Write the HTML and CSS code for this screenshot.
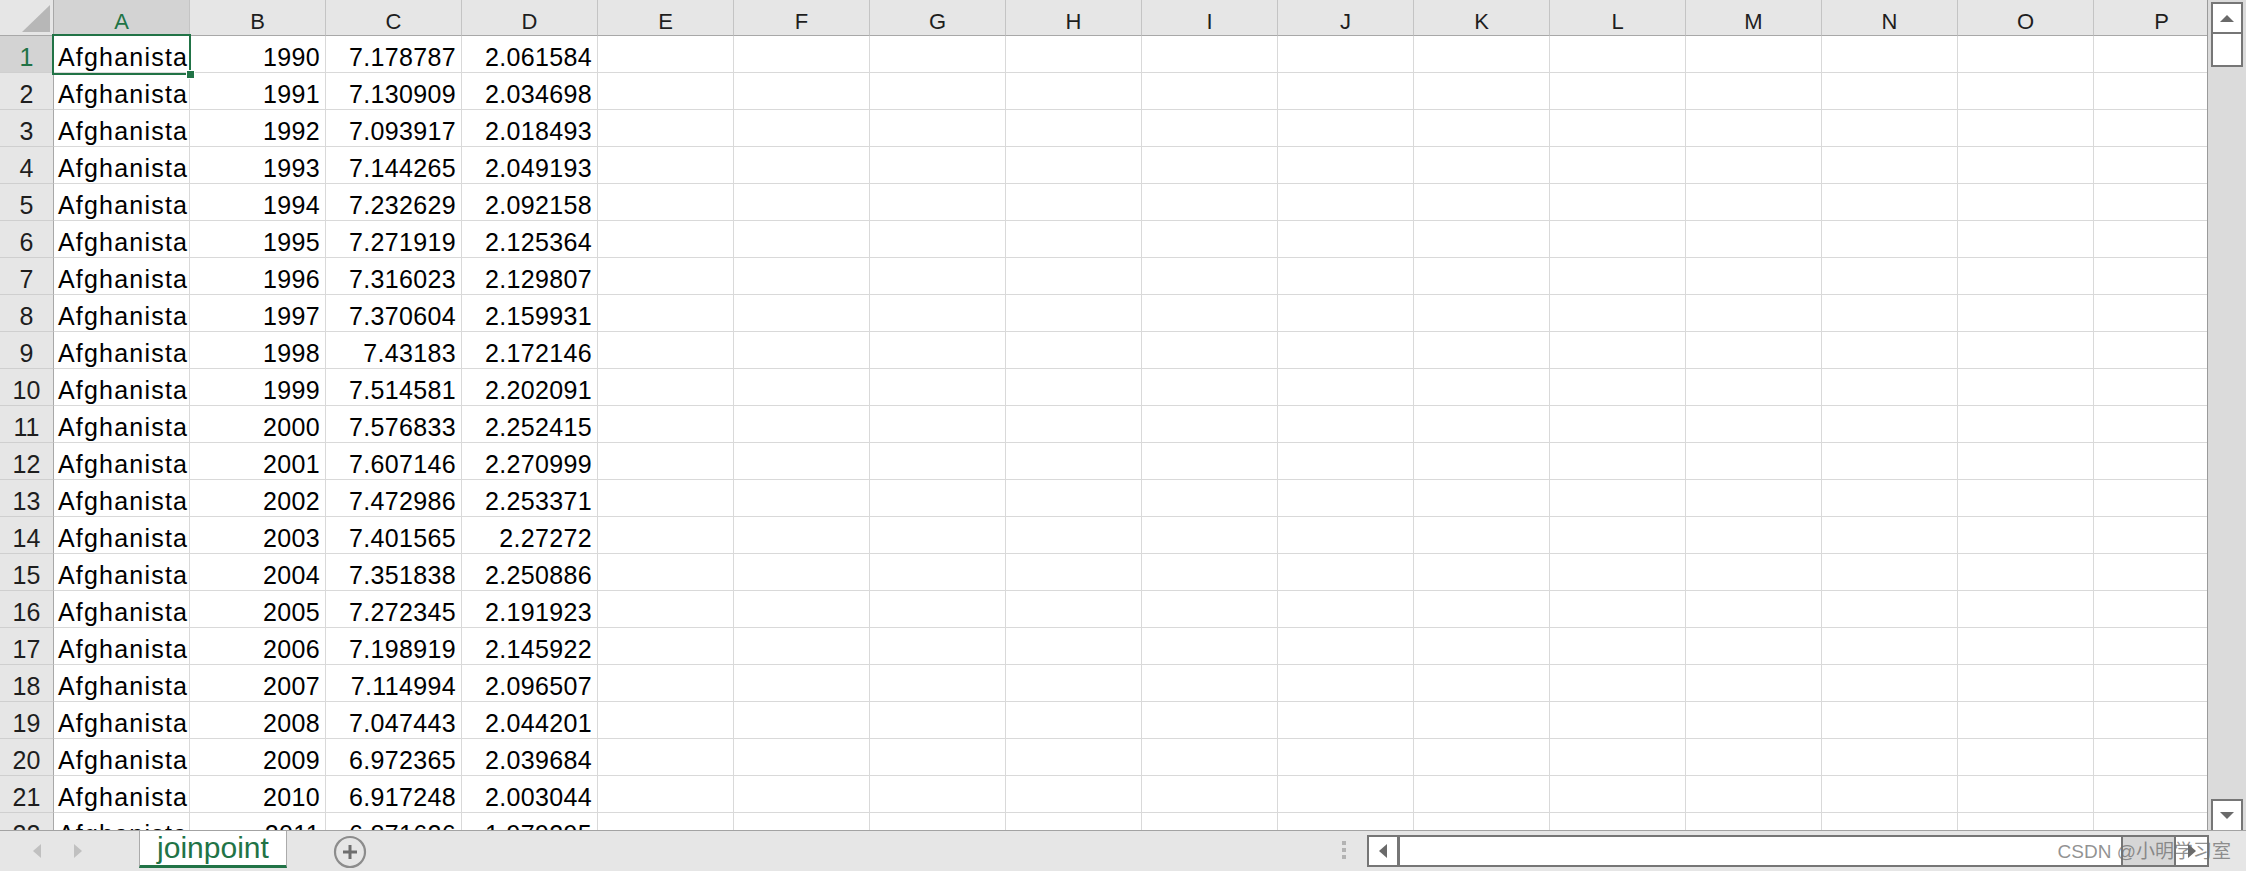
FILE: index.html
```html
<!DOCTYPE html>
<html lang="en">
<head>
<meta charset="utf-8">
<title>joinpoint</title>
<link rel="stylesheet" href="styles.css">
</head>
<body>
<div class="app">
  <div class="main">
    <div class="sheet">
      <div class="grid">
        <div class="corner"><span class="tri"></span></div>
        <div class="ch sel">A</div><div class="ch">B</div><div class="ch">C</div><div class="ch">D</div><div class="ch">E</div><div class="ch">F</div><div class="ch">G</div><div class="ch">H</div><div class="ch">I</div><div class="ch">J</div><div class="ch">K</div><div class="ch">L</div><div class="ch">M</div><div class="ch">N</div><div class="ch">O</div><div class="ch">P</div>

        <div class="rh sel">1</div><div class="c t">Afghanistan</div><div class="c n">1990</div><div class="c n">7.178787</div><div class="c n">2.061584</div>
        <div class="c"></div><div class="c"></div><div class="c"></div><div class="c"></div><div class="c"></div><div class="c"></div><div class="c"></div><div class="c"></div><div class="c"></div><div class="c"></div><div class="c"></div><div class="c"></div>
        <div class="rh">2</div><div class="c t">Afghanistan</div><div class="c n">1991</div><div class="c n">7.130909</div><div class="c n">2.034698</div>
        <div class="c"></div><div class="c"></div><div class="c"></div><div class="c"></div><div class="c"></div><div class="c"></div><div class="c"></div><div class="c"></div><div class="c"></div><div class="c"></div><div class="c"></div><div class="c"></div>
        <div class="rh">3</div><div class="c t">Afghanistan</div><div class="c n">1992</div><div class="c n">7.093917</div><div class="c n">2.018493</div>
        <div class="c"></div><div class="c"></div><div class="c"></div><div class="c"></div><div class="c"></div><div class="c"></div><div class="c"></div><div class="c"></div><div class="c"></div><div class="c"></div><div class="c"></div><div class="c"></div>
        <div class="rh">4</div><div class="c t">Afghanistan</div><div class="c n">1993</div><div class="c n">7.144265</div><div class="c n">2.049193</div>
        <div class="c"></div><div class="c"></div><div class="c"></div><div class="c"></div><div class="c"></div><div class="c"></div><div class="c"></div><div class="c"></div><div class="c"></div><div class="c"></div><div class="c"></div><div class="c"></div>
        <div class="rh">5</div><div class="c t">Afghanistan</div><div class="c n">1994</div><div class="c n">7.232629</div><div class="c n">2.092158</div>
        <div class="c"></div><div class="c"></div><div class="c"></div><div class="c"></div><div class="c"></div><div class="c"></div><div class="c"></div><div class="c"></div><div class="c"></div><div class="c"></div><div class="c"></div><div class="c"></div>
        <div class="rh">6</div><div class="c t">Afghanistan</div><div class="c n">1995</div><div class="c n">7.271919</div><div class="c n">2.125364</div>
        <div class="c"></div><div class="c"></div><div class="c"></div><div class="c"></div><div class="c"></div><div class="c"></div><div class="c"></div><div class="c"></div><div class="c"></div><div class="c"></div><div class="c"></div><div class="c"></div>
        <div class="rh">7</div><div class="c t">Afghanistan</div><div class="c n">1996</div><div class="c n">7.316023</div><div class="c n">2.129807</div>
        <div class="c"></div><div class="c"></div><div class="c"></div><div class="c"></div><div class="c"></div><div class="c"></div><div class="c"></div><div class="c"></div><div class="c"></div><div class="c"></div><div class="c"></div><div class="c"></div>
        <div class="rh">8</div><div class="c t">Afghanistan</div><div class="c n">1997</div><div class="c n">7.370604</div><div class="c n">2.159931</div>
        <div class="c"></div><div class="c"></div><div class="c"></div><div class="c"></div><div class="c"></div><div class="c"></div><div class="c"></div><div class="c"></div><div class="c"></div><div class="c"></div><div class="c"></div><div class="c"></div>
        <div class="rh">9</div><div class="c t">Afghanistan</div><div class="c n">1998</div><div class="c n">7.43183</div><div class="c n">2.172146</div>
        <div class="c"></div><div class="c"></div><div class="c"></div><div class="c"></div><div class="c"></div><div class="c"></div><div class="c"></div><div class="c"></div><div class="c"></div><div class="c"></div><div class="c"></div><div class="c"></div>
        <div class="rh">10</div><div class="c t">Afghanistan</div><div class="c n">1999</div><div class="c n">7.514581</div><div class="c n">2.202091</div>
        <div class="c"></div><div class="c"></div><div class="c"></div><div class="c"></div><div class="c"></div><div class="c"></div><div class="c"></div><div class="c"></div><div class="c"></div><div class="c"></div><div class="c"></div><div class="c"></div>
        <div class="rh">11</div><div class="c t">Afghanistan</div><div class="c n">2000</div><div class="c n">7.576833</div><div class="c n">2.252415</div>
        <div class="c"></div><div class="c"></div><div class="c"></div><div class="c"></div><div class="c"></div><div class="c"></div><div class="c"></div><div class="c"></div><div class="c"></div><div class="c"></div><div class="c"></div><div class="c"></div>
        <div class="rh">12</div><div class="c t">Afghanistan</div><div class="c n">2001</div><div class="c n">7.607146</div><div class="c n">2.270999</div>
        <div class="c"></div><div class="c"></div><div class="c"></div><div class="c"></div><div class="c"></div><div class="c"></div><div class="c"></div><div class="c"></div><div class="c"></div><div class="c"></div><div class="c"></div><div class="c"></div>
        <div class="rh">13</div><div class="c t">Afghanistan</div><div class="c n">2002</div><div class="c n">7.472986</div><div class="c n">2.253371</div>
        <div class="c"></div><div class="c"></div><div class="c"></div><div class="c"></div><div class="c"></div><div class="c"></div><div class="c"></div><div class="c"></div><div class="c"></div><div class="c"></div><div class="c"></div><div class="c"></div>
        <div class="rh">14</div><div class="c t">Afghanistan</div><div class="c n">2003</div><div class="c n">7.401565</div><div class="c n">2.27272</div>
        <div class="c"></div><div class="c"></div><div class="c"></div><div class="c"></div><div class="c"></div><div class="c"></div><div class="c"></div><div class="c"></div><div class="c"></div><div class="c"></div><div class="c"></div><div class="c"></div>
        <div class="rh">15</div><div class="c t">Afghanistan</div><div class="c n">2004</div><div class="c n">7.351838</div><div class="c n">2.250886</div>
        <div class="c"></div><div class="c"></div><div class="c"></div><div class="c"></div><div class="c"></div><div class="c"></div><div class="c"></div><div class="c"></div><div class="c"></div><div class="c"></div><div class="c"></div><div class="c"></div>
        <div class="rh">16</div><div class="c t">Afghanistan</div><div class="c n">2005</div><div class="c n">7.272345</div><div class="c n">2.191923</div>
        <div class="c"></div><div class="c"></div><div class="c"></div><div class="c"></div><div class="c"></div><div class="c"></div><div class="c"></div><div class="c"></div><div class="c"></div><div class="c"></div><div class="c"></div><div class="c"></div>
        <div class="rh">17</div><div class="c t">Afghanistan</div><div class="c n">2006</div><div class="c n">7.198919</div><div class="c n">2.145922</div>
        <div class="c"></div><div class="c"></div><div class="c"></div><div class="c"></div><div class="c"></div><div class="c"></div><div class="c"></div><div class="c"></div><div class="c"></div><div class="c"></div><div class="c"></div><div class="c"></div>
        <div class="rh">18</div><div class="c t">Afghanistan</div><div class="c n">2007</div><div class="c n">7.114994</div><div class="c n">2.096507</div>
        <div class="c"></div><div class="c"></div><div class="c"></div><div class="c"></div><div class="c"></div><div class="c"></div><div class="c"></div><div class="c"></div><div class="c"></div><div class="c"></div><div class="c"></div><div class="c"></div>
        <div class="rh">19</div><div class="c t">Afghanistan</div><div class="c n">2008</div><div class="c n">7.047443</div><div class="c n">2.044201</div>
        <div class="c"></div><div class="c"></div><div class="c"></div><div class="c"></div><div class="c"></div><div class="c"></div><div class="c"></div><div class="c"></div><div class="c"></div><div class="c"></div><div class="c"></div><div class="c"></div>
        <div class="rh">20</div><div class="c t">Afghanistan</div><div class="c n">2009</div><div class="c n">6.972365</div><div class="c n">2.039684</div>
        <div class="c"></div><div class="c"></div><div class="c"></div><div class="c"></div><div class="c"></div><div class="c"></div><div class="c"></div><div class="c"></div><div class="c"></div><div class="c"></div><div class="c"></div><div class="c"></div>
        <div class="rh">21</div><div class="c t">Afghanistan</div><div class="c n">2010</div><div class="c n">6.917248</div><div class="c n">2.003044</div>
        <div class="c"></div><div class="c"></div><div class="c"></div><div class="c"></div><div class="c"></div><div class="c"></div><div class="c"></div><div class="c"></div><div class="c"></div><div class="c"></div><div class="c"></div><div class="c"></div>
        <div class="rh">22</div><div class="c t">Afghanistan</div><div class="c n">2011</div><div class="c n">6.871626</div><div class="c n">1.979295</div>
        <div class="c"></div><div class="c"></div><div class="c"></div><div class="c"></div><div class="c"></div><div class="c"></div><div class="c"></div><div class="c"></div><div class="c"></div><div class="c"></div><div class="c"></div><div class="c"></div>
      </div>
      <div class="selection"><span class="handle"></span></div>
    </div>
    <div class="vscroll">
      <div class="sbtn up"><span class="tri-up"></span></div>
      <div class="vthumb"></div>
      <div class="vtrack"></div>
      <div class="sbtn down"><span class="tri-down"></span></div>
    </div>
  </div>
  <div class="bottombar">
    <div class="nav">
      <span class="tri-left light"></span>
      <span class="tri-right light"></span>
    </div>
    <div class="tab">joinpoint</div>
    <div class="add">
      <svg width="34" height="34" viewBox="0 0 34 34"><circle cx="17" cy="17" r="15" fill="none" stroke="#8c8c8c" stroke-width="2.2"/><path d="M17 10v14M10 17h14" stroke="#6e6e6e" stroke-width="3"/></svg>
    </div>
    <div class="spacer"></div>
    <div class="dots"><i></i><i></i><i></i></div>
    <div class="hscroll">
      <div class="hbtn left"><span class="tri-left"></span></div>
      <div class="hthumb"></div>
      <div class="htrack"></div>
      <div class="hbtn right"><span class="tri-right"></span></div>
    </div>
    <div class="watermark">CSDN @小明学习室</div>
  </div>
</div>
</body>
</html>
```

FILE: styles.css
```css
* { box-sizing: border-box; }
html, body { margin: 0; padding: 0; }
body {
  width: 2246px;
  height: 871px;
  overflow: hidden;
  background: #e6e6e6;
  font-family: "Liberation Sans", Arial, "Noto Sans CJK SC", sans-serif;
  color: #000;
}
.app {
  display: flex;
  flex-direction: column;
  width: 2246px;
  height: 871px;
}
.main {
  display: flex;
  height: 830px;
}
.sheet {
  position: relative;
  width: 2208px;
  height: 830px;
  overflow: hidden;
  background: #fff;
  border-right: 1px solid #9a9a9a;
}
.grid {
  display: grid;
  grid-template-columns: 54px repeat(16, 136px);
  grid-template-rows: 36px;
  grid-auto-rows: 37px;
}
.corner {
  position: relative;
  background: #e6e6e6;
  border-right: 1px solid #a8a8a8;
  border-bottom: 1px solid #a8a8a8;
}
.corner .tri {
  position: absolute;
  left: 22px;
  top: 5px;
  width: 28px;
  height: 27px;
  background: #b7b7b7;
  clip-path: polygon(100% 0, 100% 100%, 0 100%);
}
.ch {
  background: #e6e6e6;
  border-right: 1px solid #c4c4c4;
  border-bottom: 1px solid #a8a8a8;
  text-align: center;
  font-size: 22px;
  line-height: 25px;
  padding-top: 9px;
  color: #1e1e1e;
}
.rh {
  background: #e6e6e6;
  border-right: 1px solid #a8a8a8;
  border-bottom: 1px solid #cfcfcf;
  text-align: center;
  font-size: 25px;
  line-height: 28px;
  padding-top: 7px;
  color: #1e1e1e;
}
.ch.sel, .rh.sel {
  background: #d3d3d3;
  color: #217346;
}
.c {
  border-right: 1px solid #d9d9d9;
  border-bottom: 1px solid #d9d9d9;
  font-size: 25px;
  line-height: 28px;
  padding-top: 7px;
  white-space: nowrap;
  overflow: hidden;
}
.c.t {
  padding-left: 4px;
  letter-spacing: 1.2px;
}
.c.n {
  text-align: right;
  padding-right: 5px;
  letter-spacing: 0.35px;
}
.selection {
  position: absolute;
  left: 52px;
  top: 34px;
  width: 139px;
  height: 41px;
  border: 2px solid #217346;
}
.selection .handle {
  position: absolute;
  right: -6px;
  bottom: -6px;
  width: 9px;
  height: 9px;
  background: #217346;
  border: 1px solid #fff;
}
.vscroll {
  width: 38px;
  height: 830px;
  background: #dbdbdb;
  display: flex;
  flex-direction: column;
  padding: 2px 3px 0 3px;
}
.sbtn, .vthumb {
  height: 32px;
  background: #fff;
  border: 2px solid #767676;
  display: flex;
  align-items: center;
  justify-content: center;
}
.vthumb { height: 35px; margin-top: -2px; }
.vtrack { flex: 1; }
.sbtn.down { height: 33px; margin-bottom: -2px; }
.tri-up {
  width: 0; height: 0;
  border-left: 7px solid transparent;
  border-right: 7px solid transparent;
  border-bottom: 7px solid #6a6a6a;
}
.tri-down {
  width: 0; height: 0;
  border-left: 7px solid transparent;
  border-right: 7px solid transparent;
  border-top: 7px solid #6a6a6a;
}
.bottombar {
  position: relative;
  flex: 1;
  display: flex;
  align-items: flex-start;
  background: #e6e6e6;
  border-top: 1px solid #a3a3a3;
}
.nav {
  width: 139px;
  height: 40px;
  display: flex;
  align-items: center;
  padding-left: 33px;
  gap: 33px;
}
.tri-left {
  width: 0; height: 0;
  border-top: 7px solid transparent;
  border-bottom: 7px solid transparent;
  border-right: 8px solid #6a6a6a;
}
.tri-right {
  width: 0; height: 0;
  border-top: 7px solid transparent;
  border-bottom: 7px solid transparent;
  border-left: 8px solid #6a6a6a;
}
.tri-left.light { border-right-color: #c0c0c0; }
.tri-right.light { border-left-color: #c0c0c0; }
.tab {
  width: 148px;
  height: 37px;
  background: #fff;
  border-left: 1px solid #ababab;
  border-right: 1px solid #ababab;
  border-bottom: 3px solid #217346;
  color: #217346;
  font-size: 30px;
  line-height: 33px;
  text-align: center;
}
.add {
  margin-left: 46px;
  margin-top: 4px;
  width: 34px;
  height: 34px;
}
.add svg { display: block; }
.spacer { flex: 1; }
.dots {
  display: flex;
  flex-direction: column;
  gap: 3px;
  margin-top: 10px;
  margin-right: 21px;
}
.dots i {
  display: block;
  width: 4px;
  height: 4px;
  background: #b3b3b3;
}
.hscroll {
  width: 842px;
  height: 32px;
  margin-top: 4px;
  margin-right: 37px;
  display: flex;
  border: 2px solid #767676;
  background: #fff;
}
.hbtn {
  width: 30px;
  display: flex;
  align-items: center;
  justify-content: center;
  background: #fff;
}
.hbtn.left { border-right: 3px solid #767676; width: 31px; }
.hbtn.right { border-left: 2px solid #767676; width: 33px; }
.hthumb {
  flex: 1;
  background: #fff;
  border-right: 2px solid #767676;
}
.htrack {
  width: 51px;
  background: #d6d6d6;
}
.watermark {
  position: absolute;
  right: 15px;
  top: 10px;
  font-size: 19px;
  line-height: 22px;
  color: rgba(110, 110, 110, 0.75);
  white-space: nowrap;
  font-family: "Liberation Sans", "Noto Sans CJK SC", sans-serif;
}
```
